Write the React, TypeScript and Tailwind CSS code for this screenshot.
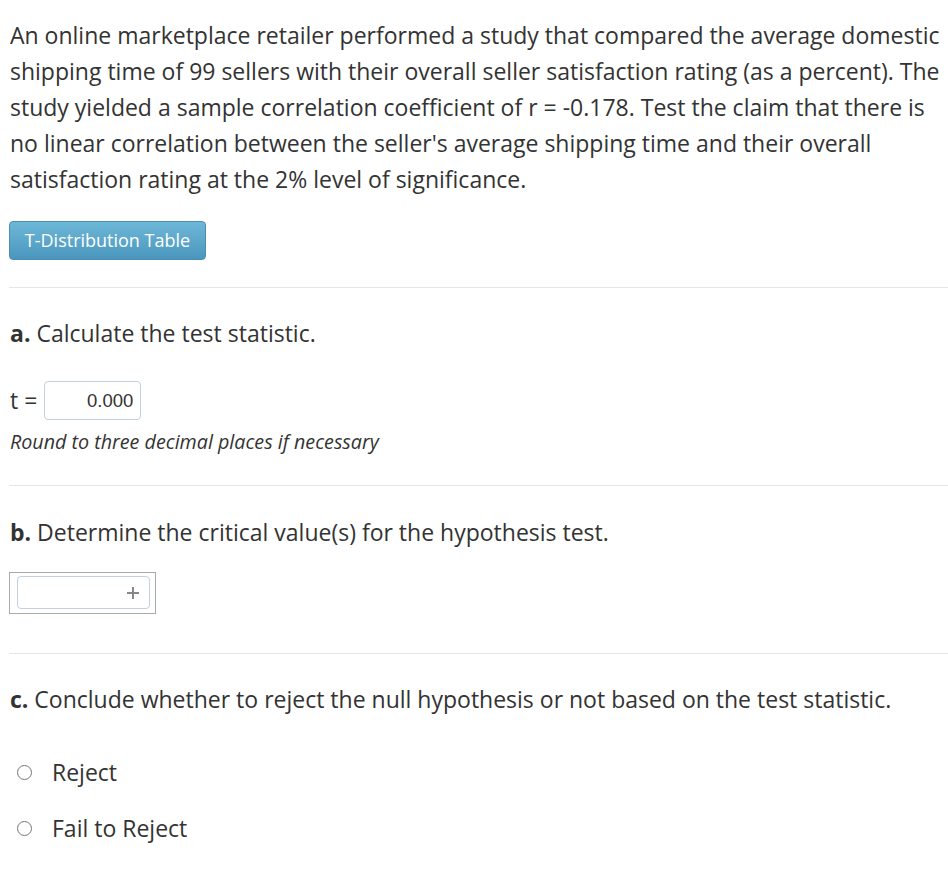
import React from "react";

function Divider() {
  return <div className="ml-[9px] h-px bg-[#e6e6e6]" />;
}

function Radio({ label }: { label: string }) {
  return (
    <div className="flex items-center h-[36px]">
      <span className="ml-[17px] w-[15px] h-[15px] rounded-full border border-[#777] bg-white" />
      <span className="ml-[20px] text-[23px]">{label}</span>
    </div>
  );
}

export default function App() {
  return (
    <div
      className="w-[948px] h-[870px] bg-white text-[#333] overflow-hidden"
      style={{ fontFamily: '"Open Sans", "Noto Sans", sans-serif' }}
    >
      <p className="pl-[10px] pr-[2px] pt-[17px] text-[23px] leading-[36px]">
        An online marketplace retailer performed a study that compared the average domestic shipping time of 99 sellers
        with their overall seller satisfaction rating (as a percent). The study yielded a sample correlation coefficient
        of r = -0.178. Test the claim that there is no linear correlation between the seller's average shipping time and
        their overall satisfaction rating at the 2% level of significance.
      </p>

      <div className="pl-[9px] mt-[24px]">
        <button className="w-[197px] h-[39px] rounded-[4px] border border-[#4a8fb3] bg-gradient-to-b from-[#6db8d8] to-[#4b96bd] text-white text-[18px]">
          T-Distribution Table
        </button>
      </div>

      <div className="mt-[27px]">
        <Divider />
      </div>

      <div className="pl-[10px] mt-[27px] text-[23px] leading-[36px]">
        <span className="font-bold">a.</span> Calculate the test statistic.
      </div>

      <div className="pl-[10px] mt-[30px] flex items-center">
        <span className="text-[23px]">t =</span>
        <div
          className="ml-[7px] w-[97px] h-[39px] rounded-[4px] border border-[#c5cfdf] flex items-center justify-end pr-[7px] text-[18.5px] text-[#333]"
          style={{ fontFamily: '"Liberation Sans", Arial, sans-serif' }}
        >
          0.000
        </div>
      </div>

      <div className="pl-[10px] mt-[4px] text-[19.7px] italic leading-[36px]">
        Round to three decimal places if necessary
      </div>

      <div className="mt-[25px]">
        <Divider />
      </div>

      <div className="pl-[10px] mt-[28px] text-[23px] leading-[36px]">
        <span className="font-bold">b.</span> Determine the critical value(s) for the hypothesis test.
      </div>

      <div className="pl-[9px] mt-[22px]">
        <div className="w-[147px] h-[42px] border border-[#aaa] p-[3px] pl-[7px]">
          <div className="w-[133px] h-[33px] rounded-[4px] border border-[#c5cfdf] flex items-center justify-end pr-[9px]">
            <svg width="14" height="14" viewBox="0 0 14 14">
              <path d="M7 1v12M1 7h12" stroke="#888" strokeWidth="2" />
            </svg>
          </div>
        </div>
      </div>

      <div className="mt-[39px]">
        <Divider />
      </div>

      <div className="pl-[10px] mt-[27px] text-[23px] leading-[36px]">
        <span className="font-bold">c.</span> Conclude whether to reject the null hypothesis or not based on the test
        statistic.
      </div>

      <div className="mt-[37px] flex flex-col gap-[20px]">
        <Radio label="Reject" />
        <Radio label="Fail to Reject" />
      </div>
    </div>
  );
}
